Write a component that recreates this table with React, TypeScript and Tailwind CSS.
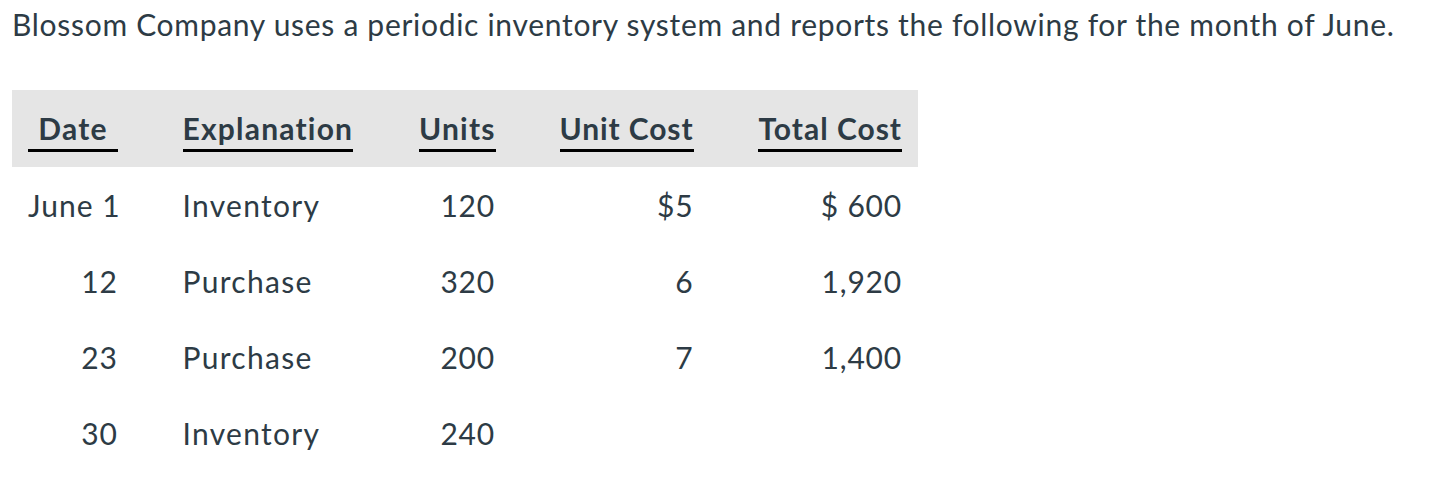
import React from "react";

const rows = [
  { date: "June 1", exp: "Inventory", units: "120", unit: "$5", total: "$ 600" },
  { date: "12", exp: "Purchase", units: "320", unit: "6", total: "1,920" },
  { date: "23", exp: "Purchase", units: "200", unit: "7", total: "1,400" },
  { date: "30", exp: "Inventory", units: "240", unit: "", total: "" },
];

const cols = "grid grid-cols-[90px_172px_76px_134px_144px] gap-x-[64.5px] px-4 whitespace-nowrap";

export default function App() {
  return (
    <div className="bg-white w-[1452px] h-[486px] text-[#2d3b45] font-['Lato',sans-serif] overflow-hidden">
      <p className="pl-3 pt-[6px] text-[30px] leading-[36px] tracking-[0.7px] whitespace-nowrap">
        Blossom Company uses a periodic inventory system and reports the following for the month of June.
      </p>
      <div className="ml-3 mt-[48px] w-[906px]">
        <div className={`${cols} bg-[#e5e5e5] pt-[20px] pb-[15px] text-[30px] leading-[36px] font-bold tracking-[1.2px]`}>
          <div>
            <span className="block text-center pb-[3px] border-b-[3px] border-black">Date</span>
          </div>
          <div>
            <span className="inline-block pb-[3px] border-b-[3px] border-black">Explanation</span>
          </div>
          <div className="text-right">
            <span className="inline-block pb-[3px] border-b-[3px] border-black">Units</span>
          </div>
          <div className="text-right">
            <span className="inline-block pb-[3px] border-b-[3px] border-black tracking-[0.9px]">Unit Cost</span>
          </div>
          <div className="text-right">
            <span className="inline-block pb-[3px] border-b-[3px] border-black tracking-[1px]">Total Cost</span>
          </div>
        </div>
        {rows.map((r, i) => (
          <div key={i} className={`${cols} py-[20px] text-[30px] leading-[36px]`}>
            <div className="text-right tracking-[1px]">{r.date}</div>
            <div className="tracking-[1.3px]">{r.exp}</div>
            <div className="text-right tracking-[0.8px]">{r.units}</div>
            <div className="text-right tracking-[0.8px]">{r.unit}</div>
            <div className="text-right tracking-[0.8px]">{r.total}</div>
          </div>
        ))}
      </div>
    </div>
  );
}
